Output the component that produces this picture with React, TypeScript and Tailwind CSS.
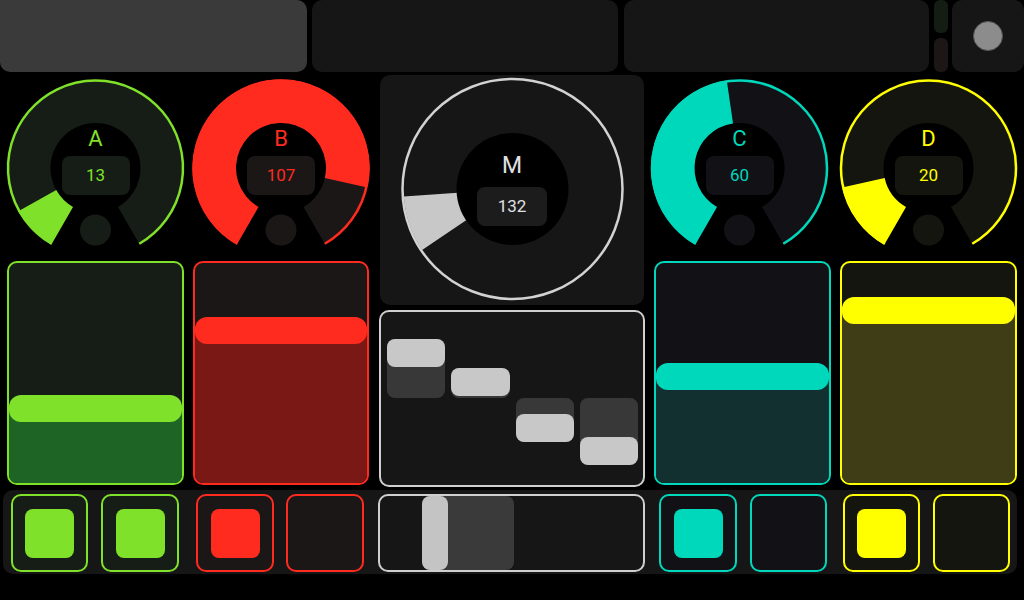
import React from "react";

type Channel = {
  label: string;
  value: number;
  color: string;
  dim: string;
  fill: string;
  handle: number;
  pads: [boolean, boolean];
  shift?: number;
};

const channels: Channel[] = [
  { label: "A", value: 13, color: "#80e12a", dim: "#161c16", fill: "#1e6424", handle: 133, pads: [true, true] },
  { label: "B", value: 107, color: "#ff2b1f", dim: "#1c1717", fill: "#7a1816", handle: 55, pads: [true, false] },
  { label: "C", value: 60, color: "#00d8bc", dim: "#111116", fill: "#123030", handle: 101, pads: [true, false], shift: -3 },
  { label: "D", value: 20, color: "#ffff00", dim: "#151510", fill: "#3e3d16", handle: 35, pads: [true, false] },
];

// angles in degrees, clockwise from 12 o'clock
function pt(cx: number, cy: number, r: number, deg: number) {
  const a = (deg * Math.PI) / 180;
  return [cx + r * Math.sin(a), cy - r * Math.cos(a)];
}

function sector(cx: number, cy: number, r1: number, r2: number, a1: number, a2: number) {
  const large = a2 - a1 > 180 ? 1 : 0;
  const [ox1, oy1] = pt(cx, cy, r2, a1);
  const [ox2, oy2] = pt(cx, cy, r2, a2);
  const [ix2, iy2] = pt(cx, cy, r1, a2);
  const [ix1, iy1] = pt(cx, cy, r1, a1);
  return `M${ox1} ${oy1} A${r2} ${r2} 0 ${large} 1 ${ox2} ${oy2} L${ix2} ${iy2} A${r1} ${r1} 0 ${large} 0 ${ix1} ${iy1} Z`;
}

function arc(cx: number, cy: number, r: number, a1: number, a2: number) {
  const large = a2 - a1 > 180 ? 1 : 0;
  const [x1, y1] = pt(cx, cy, r, a1);
  const [x2, y2] = pt(cx, cy, r, a2);
  return `M${x1} ${y1} A${r} ${r} 0 ${large} 1 ${x2} ${y2}`;
}

function Knob({ ch, width }: { ch: Channel; width: number }) {
  const cx = width / 2 + (ch.shift ?? 0);
  const cy = 89;
  const end = 210 + (ch.value / 127) * 300;
  return (
    <div className="relative h-[186px] w-full">
      <svg width={width} height={170} className="mt-[4px] block overflow-visible">
        <path d={sector(cx, cy, 45, 88, 210, 510)} fill={ch.dim} />
        <path d={sector(cx, cy, 45, 88.5, 210, end)} fill={ch.color} />
        <path d={arc(cx, cy, 87.5, 210, 510)} fill="none" stroke={ch.color} strokeWidth={2.5} />
        <circle cx={cx} cy={cy + 62} r={15.5} fill={ch.dim} />
      </svg>
      <div
        className="absolute top-[52px] w-full text-center text-[22px] leading-[24px]"
        style={{ color: ch.color, left: ch.shift ?? 0 }}
      >
        {ch.label}
      </div>
      <div
        className="absolute top-[81px] flex h-[39px] w-[68px] items-center justify-center rounded-lg text-[17px]"
        style={{ color: ch.color, backgroundColor: ch.dim, left: width / 2 - 34 + (ch.shift ?? 0) }}
      >
        {ch.value}
      </div>
    </div>
  );
}

function Fader({ ch }: { ch: Channel }) {
  return (
    <div
      className="relative h-[224px] w-full overflow-hidden rounded-[10px] border-[2.5px]"
      style={{ borderColor: ch.color, backgroundColor: ch.dim }}
    >
      <div className="absolute inset-x-0 bottom-0" style={{ top: ch.handle + 12, backgroundColor: ch.fill }} />
      <div
        className="absolute inset-x-0 h-[27px] rounded-[12px]"
        style={{ top: ch.handle - 1, backgroundColor: ch.color }}
      />
    </div>
  );
}

function Column({ ch, width }: { ch: Channel; width: number }) {
  return (
    <div className="flex shrink-0 flex-col" style={{ width }}>
      <Knob ch={ch} width={width} />
      <Fader ch={ch} />
    </div>
  );
}

function MasterKnob() {
  const cx = 132.5;
  const cy = 114;
  return (
    <div className="relative h-[230px] rounded-[10px] bg-[#161616]">
      <svg width={264} height={230} className="block">
        <circle cx={cx} cy={cy} r={110} fill="none" stroke="#d2d2d2" strokeWidth={2.5} />
        <path d={sector(cx, cy, 55, 109, 236, 266)} fill="#c8c8c8" />
        <circle cx={cx} cy={cy} r={56} fill="#000" />
      </svg>
      <div className="absolute inset-x-0 top-[79px] text-center text-[23px] leading-[24px] text-[#e0e0e0]">M</div>
      <div className="absolute left-[97px] top-[112px] flex h-[39px] w-[70px] items-center justify-center rounded-lg bg-[#1c1c1c] text-[17px] text-[#e0e0e0]">
        132
      </div>
    </div>
  );
}

// top/bottom of each step bar (px from the panel's inner top)
const steps = [
  { bar: [27, 86], knob: 27 },
  { bar: [56, 86], knob: 56 },
  { bar: [86, 130], knob: 102 },
  { bar: [86, 151], knob: 125 },
];

function StepPanel() {
  return (
    <div className="flex h-[177px] gap-[6px] rounded-[10px] border-[2.5px] border-[#cfcfcf] bg-[#161616] pl-[6px] pr-[5px]">
      {steps.map((s, i) => (
        <div key={i} className="relative h-full flex-1">
          <div
            className="absolute inset-x-0 rounded-lg bg-[#383838]"
            style={{ top: s.bar[0], height: s.bar[1] - s.bar[0] }}
          />
          <div className="absolute inset-x-0 h-[28px] rounded-lg bg-[#c8c8c8]" style={{ top: s.knob }} />
        </div>
      ))}
    </div>
  );
}

function Pad({ ch, on, width, ml }: { ch: Channel; on: boolean; width: string; ml: string }) {
  return (
    <div
      className={`flex h-[78px] shrink-0 items-center justify-center rounded-[10px] border-[2.5px] ${width} ${ml}`}
      style={{ borderColor: ch.color, backgroundColor: ch.dim }}
    >
      {on && <div className="h-[49px] w-[49px] rounded-lg" style={{ backgroundColor: ch.color }} />}
    </div>
  );
}

export default function App() {
  const [a, b, c, d] = channels;
  return (
    <div className="h-[600px] w-[1024px] overflow-hidden bg-black font-['Roboto',sans-serif]">
      {/* top strip */}
      <div className="flex h-[72px]">
        <div className="w-[307px] rounded-[10px] rounded-tl-none bg-[#3a3a3a]" />
        <div className="ml-[5px] w-[306px] rounded-[10px] bg-[#161616]" />
        <div className="ml-[6px] w-[305px] rounded-[10px] bg-[#161616]" />
        <div className="ml-[5px] flex w-[14px] flex-col gap-[5px]">
          <div className="h-[33px] rounded-md bg-[#141d14]" />
          <div className="flex-1 rounded-md bg-[#1d1616]" />
        </div>
        <div className="ml-[4px] flex flex-1 items-center justify-center rounded-[10px] bg-[#161616]">
          <div className="h-[30px] w-[30px] rounded-full border border-[#555] bg-[#8c8c8c]" />
        </div>
      </div>

      {/* knobs + faders */}
      <div className="mt-[3px] flex h-[412px] pl-[7px]">
        <Column ch={a} width={177} />
        <div className="ml-[9px]">
          <Column ch={b} width={176} />
        </div>
        <div className="ml-[11px] flex w-[264px] shrink-0 flex-col gap-[5px]">
          <MasterKnob />
          <div className="-ml-px -mr-px">
            <StepPanel />
          </div>
        </div>
        <div className="ml-[10px]">
          <Column ch={c} width={177} />
        </div>
        <div className="ml-[9px]">
          <Column ch={d} width={177} />
        </div>
      </div>

      {/* pads + crossfader */}
      <div className="ml-[3px] mt-[3px] flex h-[84px] w-[1014px] items-start rounded-[10px] bg-[#161616] pt-[4px]">
        <Pad ch={a} on={a.pads[0]} width="w-[77px]" ml="ml-[8px]" />
        <Pad ch={a} on={a.pads[1]} width="w-[78px]" ml="ml-[13px]" />
        <Pad ch={b} on={b.pads[0]} width="w-[78px]" ml="ml-[17px]" />
        <Pad ch={b} on={b.pads[1]} width="w-[78px]" ml="ml-[12px]" />
        <div className="relative ml-[14px] h-[78px] w-[267px] shrink-0 overflow-hidden rounded-[10px] border-[2.5px] border-[#cfcfcf] bg-[#161616]">
          <div className="absolute bottom-0 left-[42px] top-0 w-[92px] rounded-lg bg-[#3a3a3a]" />
          <div className="absolute bottom-0 left-[42px] top-0 w-[26px] rounded-lg bg-[#c4c4c4]" />
        </div>
        <Pad ch={c} on={c.pads[0]} width="w-[78px]" ml="ml-[14px]" />
        <Pad ch={c} on={c.pads[1]} width="w-[77px]" ml="ml-[13px]" />
        <Pad ch={d} on={d.pads[0]} width="w-[77px]" ml="ml-[16px]" />
        <Pad ch={d} on={d.pads[1]} width="w-[77px]" ml="ml-[13px]" />
      </div>
    </div>
  );
}
